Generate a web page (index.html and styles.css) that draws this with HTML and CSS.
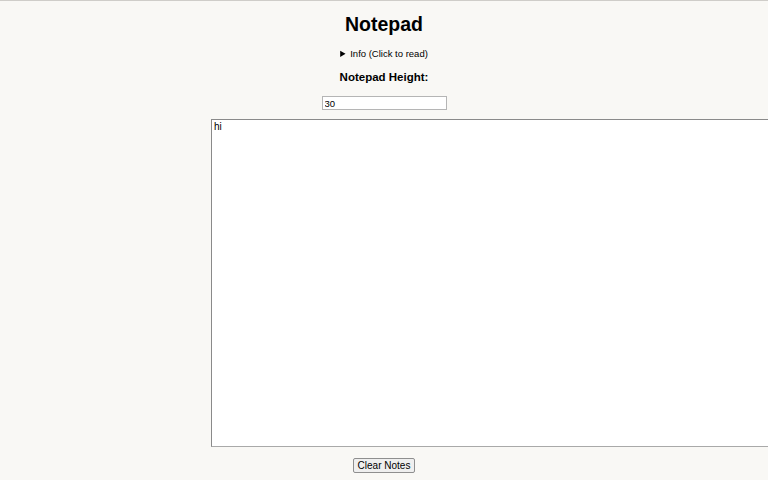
FILE: index.html
```html
<!DOCTYPE html>
<html>
<head>
<meta charset="utf-8">
<link rel="stylesheet" href="styles.css">
</head>
<body>
<main class="page">
  <h1 class="title">Notepad</h1>
  <details class="info">
    <summary class="info-summary">Info (Click to read)</summary>
  </details>
  <h3 class="height-label">Notepad Height:</h3>
  <input class="height-input" type="text" value="30">
  <textarea class="notes">hi</textarea>
  <button class="clear-btn" type="button">Clear Notes</button>
</main>
</body>
</html>
```

FILE: styles.css
```css
html {
  background: #f9f8f5;
  overflow: hidden;
}
body {
  margin: 0;
  border-top: 1px solid #cfcdc9;
  font-family: "Liberation Sans", Arial, sans-serif;
  color: #000;
  overflow: hidden;
  height: 479px;
}
.page {
  display: flex;
  flex-direction: column;
  align-items: center;
}
.title {
  font-size: 19.5px;
  line-height: 22px;
  font-weight: bold;
  margin: 12px 0 0 0;
}
.info {
  margin-top: 13px;
}
.info-summary {
  font-size: 9.5px;
  line-height: 12px;
  cursor: pointer;
}
.height-label {
  font-size: 11.5px;
  line-height: 14px;
  font-weight: bold;
  margin: 10px 0 0 0;
}
.height-input {
  margin-top: 12px;
  box-sizing: border-box;
  width: 125px;
  height: 14px;
  padding: 0 2px;
  font-family: "Liberation Sans", Arial, sans-serif;
  font-size: 9.5px;
  border: 1px solid #b5b5b5;
  background: #fff;
}
.notes {
  align-self: flex-start;
  margin: 9px 0 0 211px;
  box-sizing: border-box;
  width: 640px;
  height: 328px;
  flex-shrink: 0;
  padding: 1px 2px;
  font-family: "Liberation Sans", Arial, sans-serif;
  font-size: 10px;
  border: 1px solid #a9a9a9;
  border-top-color: #8a8a8a;
  border-left-color: #8a8a8a;
  background: #fff;
  resize: none;
}
.clear-btn {
  margin-top: 11px;
  box-sizing: border-box;
  height: 15px;
  padding: 0 4px;
  font-family: "Liberation Sans", Arial, sans-serif;
  font-size: 10px;
  line-height: 12px;
  background: #efefef;
  border: 1px solid #8f8f8f;
  border-radius: 2px;
  color: #000;
}
```
